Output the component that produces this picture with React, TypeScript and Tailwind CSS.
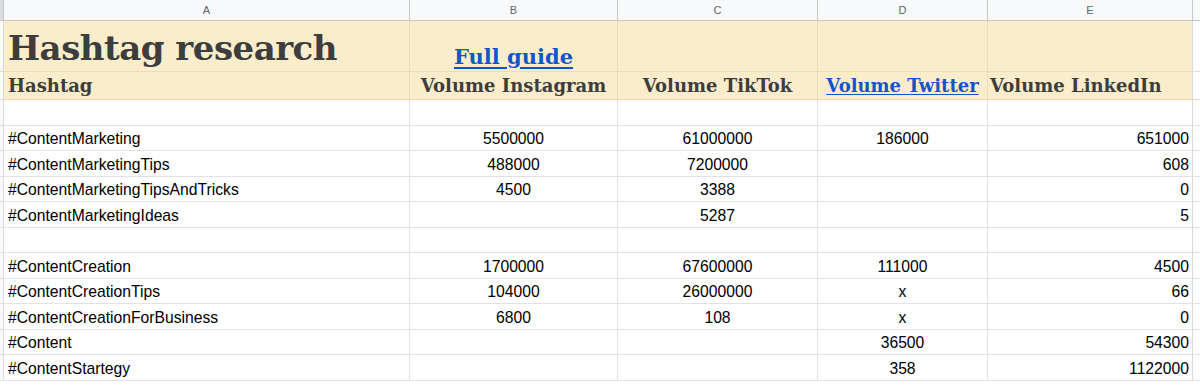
import React from 'react';

const cols = [
  { key: 'A', w: 'w-[406px]' },
  { key: 'B', w: 'w-[208px]' },
  { key: 'C', w: 'w-[200px]' },
  { key: 'D', w: 'w-[170px]' },
  { key: 'E', w: 'w-[205px]' },
];

const rows: (string[] | null)[] = [
  null,
  ['#ContentMarketing', '5500000', '61000000', '186000', '651000'],
  ['#ContentMarketingTips', '488000', '7200000', '', '608'],
  ['#ContentMarketingTipsAndTricks', '4500', '3388', '', '0'],
  ['#ContentMarketingIdeas', '', '5287', '', '5'],
  null,
  ['#ContentCreation', '1700000', '67600000', '111000', '4500'],
  ['#ContentCreationTips', '104000', '26000000', 'x', '66'],
  ['#ContentCreationForBusiness', '6800', '108', 'x', '0'],
  ['#Content', '', '', '36500', '54300'],
  ['#ContentStartegy', '', '', '358', '1122000'],
];

const serif = "font-['DejaVu_Serif',Georgia,serif] font-bold";

const App: React.FC = () => {
  return (
    <div className="w-[1200px] h-[389px] overflow-hidden bg-white font-['Liberation_Sans',Arial,sans-serif]">
      {/* column letters */}
      <div className="flex h-[21px] border-b border-[#c4c7c5] bg-[#f8f9fa]">
        <div className="w-[4px] border-r border-[#c4c7c5] bg-[#dadce0]" />
        {cols.map((c) => (
          <div
            key={c.key}
            className={`${c.w} shrink-0 border-r border-[#c4c7c5] flex items-center justify-center text-[11px] text-[#5f6368]`}
          >
            {c.key}
          </div>
        ))}
        <div className="flex-1" />
      </div>

      {/* title row */}
      <div className="flex h-[51px] border-b border-[#e8dcbd]">
        <div className="w-[4px] border-r border-[#d9d9d9] bg-[#f8f9fa]" />
        <div className={`w-[406px] shrink-0 bg-[#fbedcb] border-r border-[#e8dcbd] flex items-center pl-[4px] pt-[4px] text-[34px] leading-none tracking-[-0.5px] text-[#3d3d3d] whitespace-nowrap ${serif}`}>
          Hashtag research
        </div>
        <div className="w-[208px] shrink-0 bg-[#fbedcb] border-r border-[#e8dcbd] flex items-end justify-center pb-[4px]">
          <a className={`text-[21px] leading-none text-[#1155cc] underline underline-offset-[3px] ${serif}`}>Full guide</a>
        </div>
        <div className="w-[200px] shrink-0 bg-[#fbedcb] border-r border-[#e8dcbd]" />
        <div className="w-[170px] shrink-0 bg-[#fbedcb] border-r border-[#e8dcbd]" />
        <div className="w-[205px] shrink-0 bg-[#fbedcb] border-r border-[#d9d9d9]" />
        <div className="flex-1" />
      </div>

      {/* header row */}
      <div className={`flex h-[28px] border-b border-[#e8dcbd] text-[18px] leading-none text-[#3d3d3d] ${serif}`}>
        <div className="w-[4px] border-r border-[#d9d9d9] bg-[#f8f9fa]" />
        <div className="w-[406px] shrink-0 bg-[#fbedcb] border-r border-[#e8dcbd] flex items-center pl-[4px] pt-[1px]">Hashtag</div>
        <div className="w-[208px] shrink-0 bg-[#fbedcb] border-r border-[#e8dcbd] flex items-center justify-center pt-[1px] whitespace-nowrap">Volume Instagram</div>
        <div className="w-[200px] shrink-0 bg-[#fbedcb] border-r border-[#e8dcbd] flex items-center justify-center pt-[1px] whitespace-nowrap">Volume TikTok</div>
        <div className="w-[170px] shrink-0 bg-[#fbedcb] border-r border-[#e8dcbd] flex items-center justify-center pt-[1px]">
          <a className="text-[#1155cc] underline underline-offset-[2px] whitespace-nowrap">Volume Twitter</a>
        </div>
        <div className="w-[205px] shrink-0 bg-[#fbedcb] border-r border-[#d9d9d9] flex items-center pl-[2px] pt-[1px] whitespace-nowrap">Volume LinkedIn</div>
        <div className="flex-1" />
      </div>

      {/* data rows */}
      {rows.map((r, i) => (
        <div key={i} className="flex h-[25.5px] border-b border-[#e2e2e2] text-[15.7px] text-black">
          <div className="w-[4px] border-r border-[#d9d9d9] bg-[#f8f9fa]" />
          <div className="w-[406px] shrink-0 border-r border-[#e2e2e2] flex items-center pl-[4px] pt-[3px] whitespace-nowrap">{r ? r[0] : ''}</div>
          <div className="w-[208px] shrink-0 border-r border-[#e2e2e2] flex items-center justify-center pt-[3px]">{r ? r[1] : ''}</div>
          <div className="w-[200px] shrink-0 border-r border-[#e2e2e2] flex items-center justify-center pt-[3px]">{r ? r[2] : ''}</div>
          <div className="w-[170px] shrink-0 border-r border-[#e2e2e2] flex items-center justify-center pt-[3px]">{r ? r[3] : ''}</div>
          <div className="w-[205px] shrink-0 border-r border-[#d9d9d9] flex items-center justify-end pr-[3px] pt-[3px]">{r ? r[4] : ''}</div>
          <div className="flex-1" />
        </div>
      ))}
    </div>
  );
};

export default App;
